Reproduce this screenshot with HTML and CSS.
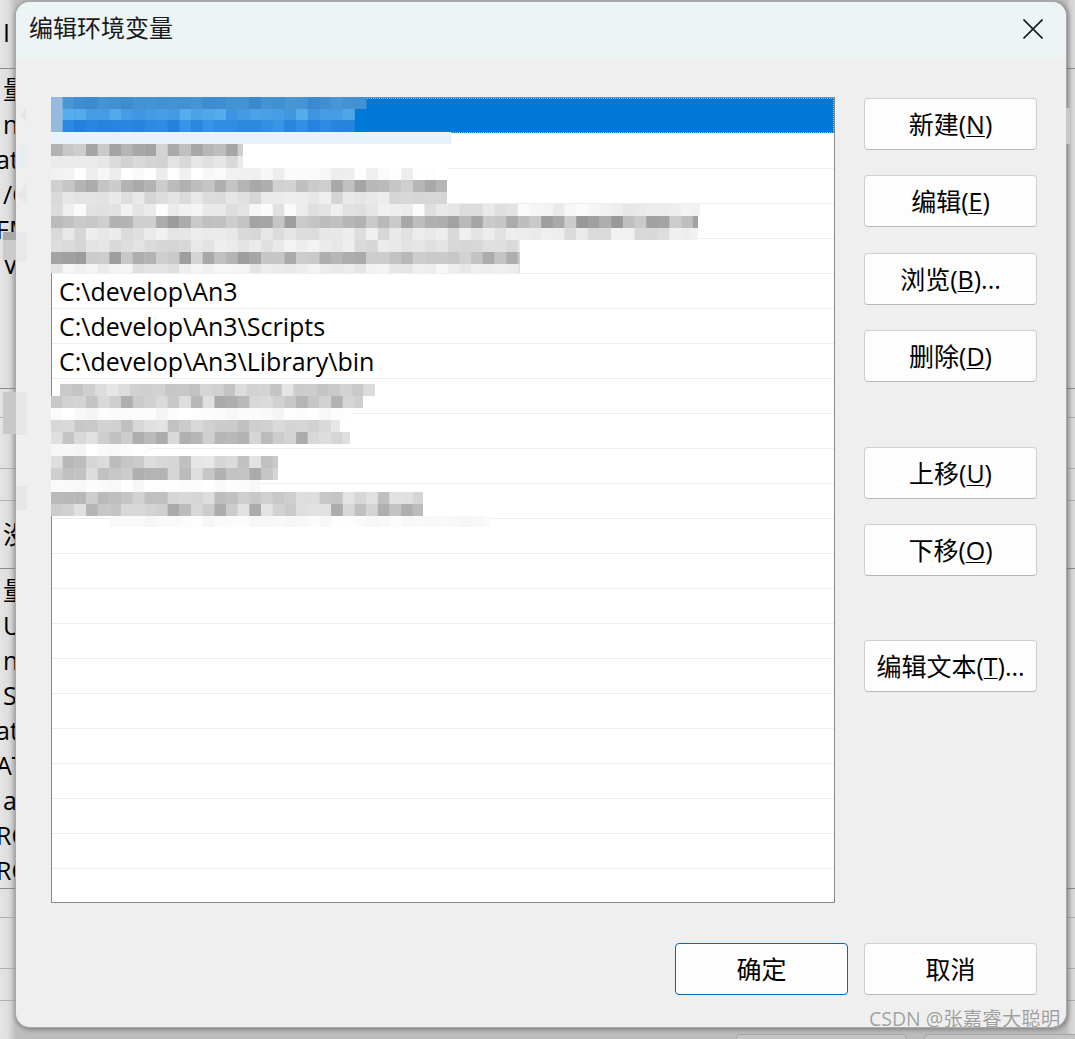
FILE: index.html
```html
<!DOCTYPE html>
<html lang="zh-CN">
<head>
<meta charset="utf-8">
<title>编辑环境变量</title>
<link rel="stylesheet" href="styles.css">
</head>
<body>
<div class="desktop">
  <div class="backdrop">
    <div class="band band-top"><span class="peek peek-i">I</span></div>
    <div class="band band-list">
      <div class="peek">量</div><div class="peek">n</div><div class="peek peek-cut">at</div>
      <div class="peek">/C</div><div class="peek peek-cut">FM</div><div class="peek">VI</div>
    </div>
    <div class="band band-h29"></div>
    <div class="band band-h51"></div>
    <div class="band band-h32"></div>
    <div class="band band-h68"><div class="peek">没</div></div>
    <div class="band band-list2">
      <div class="peek">量</div><div class="peek">U</div><div class="peek">n</div><div class="peek">S</div>
      <div class="peek peek-cut">at</div><div class="peek peek-cut">AT</div><div class="peek">a</div><div class="peek peek-cut">RC</div><div class="peek peek-cut">RC</div>
    </div>
    <div class="band band-h29"></div>
    <div class="band band-h51"></div>
    <div class="band band-h32"></div>
    <div class="under-buttons">
      <div class="under-btn"></div>
      <div class="under-btn"></div>
    </div>
  </div>

  <section class="dialog">
    <header class="titlebar">
      <h1 class="title">编辑环境变量</h1>
      <svg class="close" viewBox="0 0 20 20" aria-label="关闭"><path d="M0.5 0.5 L19.5 19.5 M19.5 0.5 L0.5 19.5"/></svg>
    </header>
    <div class="content">
      <div class="pathlist">
        <div class="row row-selected"></div>
        <div class="row"></div><div class="row"></div><div class="row"></div><div class="row"></div>
        <div class="row">C:\develop\An3</div>
        <div class="row">C:\develop\An3\Scripts</div>
        <div class="row">C:\develop\An3\Library\bin</div>
        <div class="row"></div><div class="row"></div><div class="row"></div><div class="row"></div>
        <div class="row"></div><div class="row"></div><div class="row"></div><div class="row"></div>
        <div class="row"></div><div class="row"></div><div class="row"></div><div class="row"></div>
        <div class="row"></div><div class="row"></div><div class="row"></div>
      </div>
      <div class="actions">
        <div class="group">
          <button class="btn">新建(<u>N</u>)</button>
          <button class="btn">编辑(<u>E</u>)</button>
          <button class="btn">浏览(<u>B</u>)...</button>
          <button class="btn">删除(<u>D</u>)</button>
        </div>
        <div class="group">
          <button class="btn">上移(<u>U</u>)</button>
          <button class="btn">下移(<u>O</u>)</button>
        </div>
        <div class="group">
          <button class="btn">编辑文本(<u>T</u>)...</button>
        </div>
      </div>
    </div>
    <footer class="footer">
      <button class="btn btn-default">确定</button>
      <button class="btn">取消</button>
    </footer>
  </section>

  <svg class="mosaic" id="mosaic" width="1075" height="1039" viewBox="0 0 1075 1039" aria-hidden="true">
    <polygon points="26,108 26,122 20,115" fill="#e6e6e6"/>
    <polygon points="27,183 27,206 17,195" fill="#e8e8e8"/>
    <rect x="19" y="144" width="8" height="24" fill="#e8edef"/>
    <rect x="3" y="232" width="13" height="8" fill="#a8a8a8"/>
    <rect x="3" y="240" width="13" height="20" fill="#cbcbcb"/>
    <rect x="16" y="232" width="11" height="30" fill="#e9e9e9"/>
    <rect x="3" y="392" width="13" height="42" fill="#c8c8c8"/>
    <rect x="16" y="392" width="11" height="43" fill="#e7e7e7"/>
    <rect x="16" y="486" width="11" height="24" fill="#e7e7e7"/>
    <rect x="1066" y="108" width="4" height="36" fill="#c8c8c8"/>
  </svg>

  <div class="watermark">CSDN @张嘉睿大聪明</div>
</div>
<script src="mosaic.js"></script>
</body>
</html>
```
FILE: styles.css
```css
* { box-sizing: border-box; }
html, body { margin: 0; padding: 0; }
body {
  width: 1075px;
  height: 1039px;
  overflow: hidden;
  font-family: "Open Sans", "Noto Sans CJK SC", sans-serif;
  color: #000;
}
.desktop {
  position: relative;
  width: 1075px;
  height: 1039px;
  overflow: hidden;
  background: #c9c9c9;
}
.backdrop {
  display: flex;
  flex-direction: column;
  height: 1039px;
  background: linear-gradient(to right, #e4e4e4 0, #dedede 8px, #bdbdbd 16px, #bdbdbd 1066px, #d0d0d0 1070px, #dcdcdc 1075px);
}
.band { border-bottom: 1px solid #8c8c8c; flex: none; }
.band-top { height: 69px; padding-top: 15px; }
.band-list { height: 320px; padding-top: 3px; }
.band-h29 { height: 29px; border-bottom-color: #b0b0b0; }
.band-h51 { height: 51px; border-bottom-color: #b0b0b0; }
.band-h32 { height: 32px; border-bottom-color: #b0b0b0; }
.band-h68 { height: 68px; padding-top: 16px; }
.band-list2 { height: 320px; padding-top: 4px; }
.peek {
  height: 35px;
  padding-left: 3px;
  font-size: 25px;
  line-height: 35px;
  white-space: nowrap;
}
.peek-cut { text-indent: -7px; }
.peek-i { display: block; padding-left: 3px; }
.under-buttons {
  flex: none;
  display: flex;
  gap: 17px;
  margin: 0 0 0 736px;
  padding-top: 33px;
}
.under-btn {
  flex: none;
  width: 171px;
  height: 20px;
  background: #c4c4c4;
  border: 1px solid #a6a6a6;
  border-radius: 4px;
}

.dialog {
  position: absolute;
  left: 16px;
  top: 2px;
  width: 1050px;
  height: 1025px;
  display: flex;
  flex-direction: column;
  background: #efefef;
  border-radius: 14px;
  box-shadow: 0 0 0 1px #a9a9a9, 1px 1px 4px 2px rgba(0, 0, 0, .3);
  overflow: hidden;
}
.titlebar {
  flex: none;
  height: 56px;
  display: flex;
  align-items: center;
  justify-content: space-between;
  padding: 0 23px 0 13px;
  background: #edf4f6;
}
.title {
  margin: 0 0 5px;
  font-size: 24px;
  line-height: 32px;
  font-weight: 400;
  color: #1a1a1a;
}
.close {
  width: 20px;
  height: 20px;
  margin-bottom: 2px;
  fill: none;
  stroke: #1a1a1a;
  stroke-width: 1.6;
}
.content {
  flex: none;
  display: flex;
  padding: 39px 29px 0 35px;
  justify-content: space-between;
  align-items: flex-start;
}
.pathlist {
  width: 784px;
  height: 806px;
  background: #fff;
  border: 1px solid #7f8a93;
  overflow: hidden;
}
.row {
  height: 35px;
  padding-left: 7px;
  border-top: 1px solid #efefef;
  font-size: 25px;
  line-height: 34px;
  white-space: nowrap;
}
.row-selected {
  background: #0078d7;
  border-top: 0;
  outline: 1px dotted #d8b080;
  outline-offset: -1px;
}
.actions {
  width: 173px;
  display: flex;
  flex-direction: column;
  gap: 64.4px;
  padding-top: 1px;
}
.group {
  display: flex;
  flex-direction: column;
  gap: 25.4px;
}
.btn {
  width: 173px;
  height: 52px;
  padding: 0 0 2px;
  background: #fdfdfd;
  border: 1px solid #cfcfcf;
  border-bottom-color: #b8b8b8;
  border-radius: 4px;
  font-family: inherit;
  font-size: 25px;
  color: #000;
  white-space: nowrap;
}
.btn u { text-underline-offset: 2px; text-decoration-thickness: 1px; }
.btn-default { border: 1px solid #0067c0; }
.footer {
  flex: none;
  display: flex;
  justify-content: flex-end;
  gap: 16px;
  padding: 40px 29px 0 0;
}
.mosaic {
  position: absolute;
  left: 0;
  top: 0;
  pointer-events: none;
}
.watermark {
  position: absolute;
  left: 869px;
  top: 1006px;
  font-size: 19.5px;
  line-height: 26px;
  white-space: nowrap;
  color: rgba(130, 130, 130, .75);
  text-shadow: 0 0 1px rgba(255, 255, 255, .7);
}
```
FILE: mosaic.js
```js
// Privacy mosaic over the blurred path entries: [y, height, x0, x1, base grey, spread]
var bands = [
  [132, 12, 51, 451, "light", 0],
  [144, 12, 51, 243, 185, 26],
  [156, 12, 51, 243, 224, 14],
  [168, 12, 51, 447, 246, 10],
  [180, 12, 51, 447, 184, 26],
  [192, 12, 51, 447, 226, 14],
  [204, 12, 51, 700, 236, 16],
  [216, 12, 51, 698, 180, 28],
  [228, 12, 51, 698, 228, 14],
  [240, 12, 51, 520, 228, 16],
  [252, 12, 51, 520, 184, 28],
  [264, 9, 51, 520, 236, 14],
  [384, 12, 60, 375, 214, 22],
  [396, 12, 51, 363, 196, 28],
  [408, 12, 51, 350, 250, 5],
  [420, 12, 51, 340, 212, 22],
  [432, 12, 51, 350, 198, 28],
  [444, 12, 51, 150, 250, 5],
  [456, 12, 51, 278, 208, 24],
  [468, 12, 51, 278, 196, 26],
  [480, 12, 51, 260, 251, 4],
  [492, 12, 51, 423, 204, 24],
  [504, 12, 51, 423, 200, 30],
  [516, 11, 110, 490, 250, 4]
];
var blue = [
  [97, 12, 51, 363, [66, 143, 208], 8],
  [109, 11, 51, 351, [74, 160, 230], 14],
  [120, 12, 51, 351, [42, 138, 224], 14]
];
var svg = document.getElementById("mosaic");
var seed = 7;
function rnd() { seed = (seed * 16807) % 2147483647; return seed / 2147483647; }
function cell(x, y, w, h, fill) {
  var r = document.createElementNS("http://www.w3.org/2000/svg", "rect");
  r.setAttribute("x", x); r.setAttribute("y", y);
  r.setAttribute("width", w); r.setAttribute("height", h);
  r.setAttribute("fill", fill);
  svg.appendChild(r);
}
var CELL = 11.67;
blue.forEach(function (b) {
  for (var x = b[2], i = 0; x < b[3]; x += CELL, i++) {
    var d = (rnd() - 0.5) * 2 * b[5];
    var c = b[4];
    var fill = i === 0
      ? "rgb(148,187,221)"
      : "rgb(" + Math.round(c[0] + d) + "," + Math.round(c[1] + d) + "," + Math.round(c[2] + d * 0.5) + ")";
    cell(x, b[0], CELL + 0.4, b[1], fill);
  }
});
bands.forEach(function (b) {
  if (b[4] === "light") { cell(b[2], b[0], b[3] - b[2], b[1], "#e8f2fa"); return; }
  for (var x = b[2]; x < b[3]; x += CELL) {
    var g = Math.round(b[4] + (rnd() - 0.5) * 2 * b[5]);
    g = Math.min(255, g);
    var w = Math.min(CELL + 0.4, b[3] - x);
    cell(x, b[0], w, b[1], "rgb(" + g + "," + g + "," + Math.min(255, g + 1) + ")");
  }
});
```
